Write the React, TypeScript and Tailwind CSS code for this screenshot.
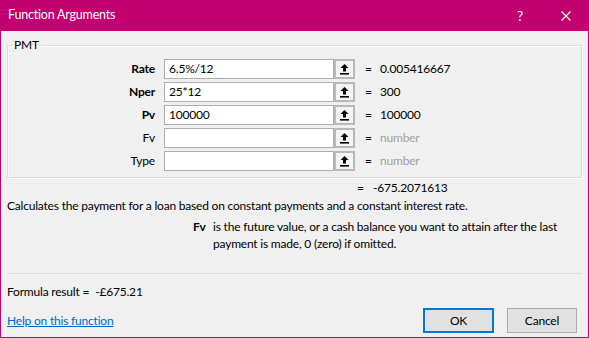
import React from "react";

const font = { fontFamily: '"Lato", "Noto Sans", sans-serif', letterSpacing: "-0.2px" };

function RefIcon() {
  return (
    <svg width="11" height="12" viewBox="0 0 11 12">
      <path d="M5.5 1 L9.5 5 L7 5 L7 8.5 L4 8.5 L4 5 L1.5 5 Z" fill="#000" />
      <rect x="1" y="10" width="9" height="1.6" fill="#000" />
    </svg>
  );
}

function Row({ label, value, result, bold, muted }: { label: string; value: string; result: string; bold?: boolean; muted?: boolean }) {
  return (
    <div className="flex items-center h-[20px] mb-[3px] last:mb-0">
      <div className={`w-[146px] text-right text-[12px] leading-none text-black ${bold ? "font-bold" : ""}`}>{label}</div>
      <div className="ml-[9px] w-[170px] h-[20px] bg-white border border-[#adadad] flex items-center pl-[4px] text-[12px] text-black">{value}</div>
      <div className="w-[21px] h-[20px] border-2 border-[#b9b9b9] bg-[#f4f4f4] flex items-center justify-center">
        <RefIcon />
      </div>
      <div className="ml-[10px] w-[15px] text-[12px] text-black">=</div>
      <div className={`text-[12px] ${muted ? "text-[#a0a0a0]" : "text-black"}`}>{result}</div>
    </div>
  );
}

export default function App() {
  return (
    <div className="w-[589px] h-[338px] bg-[#f0f0f0] border-x border-b border-[#c2006f] flex flex-col" style={font}>
      <div className="h-[31px] bg-[#c2006f] flex items-center text-white shrink-0 -mx-px">
        <div className="ml-[8px] text-[12.5px]">Function Arguments</div>
        <div className="ml-auto mr-[38px] text-[14px]">?</div>
        <svg width="10" height="10" viewBox="0 0 10 10" className="mr-[18px]">
          <path d="M0.5 0.5 L9.5 9.5 M9.5 0.5 L0.5 9.5" stroke="#fff" strokeWidth="1.1" />
        </svg>
      </div>
      <div className="px-[6px] flex flex-col">
        <fieldset className="mt-[6px] border border-[#dcdcdc] pl-[1px] pr-[1px] pt-[6px] pb-[6px] shadow-[inset_1px_1px_0_#fff,1px_1px_0_#fff]">
          <legend className="ml-[3px] px-[2px] text-[12px] text-black leading-[16px]">PMT</legend>
          <Row label="Rate" value="6.5%/12" result="0.005416667" bold />
          <Row label="Nper" value="25*12" result="300" bold />
          <Row label="Pv" value="100000" result="100000" bold />
          <Row label="Fv" value="" result="number" muted />
          <Row label="Type" value="" result="number" muted />
        </fieldset>
        <div className="flex mt-[2px] h-[16px] items-center text-[12px] text-black">
          <div className="ml-[350px] w-[16px]">=</div>
          <div>-675.2071613</div>
        </div>
        <div className="mt-[2px] h-[16px] flex items-center text-[12px] text-black whitespace-nowrap">
          Calculates the payment for a loan based on constant payments and a constant interest rate.
        </div>
        <div className="mt-[4px] flex text-[12px] text-black leading-[17px]">
          <div className="ml-[186px] w-[20px] font-bold">Fv</div>
          <div className="w-[358px]">is the future value, or a cash balance you want to attain after the last payment is made, 0 (zero) if omitted.</div>
        </div>
        <div className="mt-[21px] border-t border-[#dcdcdc] h-0" />
        <div className="mt-[10px] h-[16px] flex items-center gap-[6px] text-[12px] text-black whitespace-nowrap">
          <span>Formula result =</span>
          <span>-£675.21</span>
        </div>
        <div className="mt-[8px] flex items-center">
          <a className="text-[12px] text-[#0066cc] underline">Help on this function</a>
          <div className="ml-auto flex gap-[13px]">
            <button className="w-[71px] h-[25px] border-2 border-[#0078d7] bg-[#e1e1e1] text-[12px] text-black">OK</button>
            <button className="w-[70px] h-[25px] border border-[#adadad] bg-[#e1e1e1] text-[12px] text-black mr-[5px]">Cancel</button>
          </div>
        </div>
      </div>
    </div>
  );
}
